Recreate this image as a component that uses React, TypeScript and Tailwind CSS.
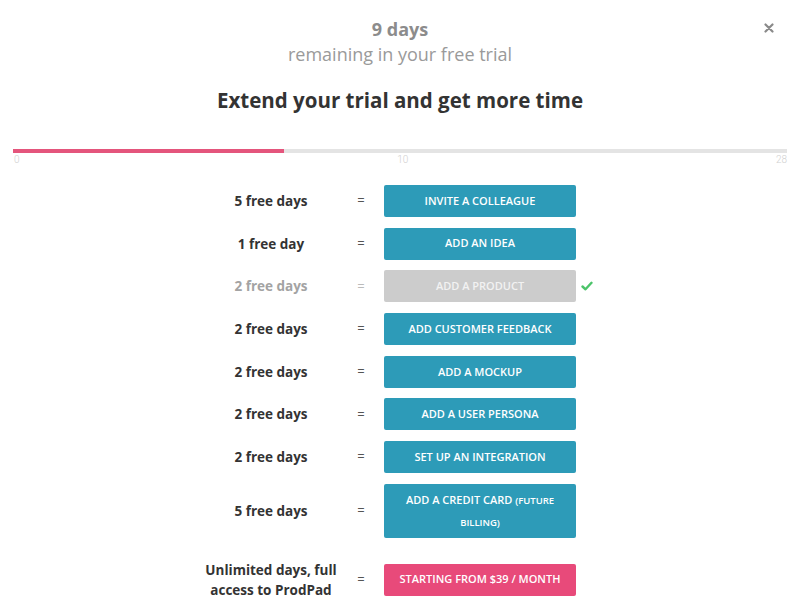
import React from 'react';

type Row = {
  days: React.ReactNode;
  action: React.ReactNode;
  done?: boolean;
  tall?: boolean;
  pink?: boolean;
};

const rows: Row[] = [
  { days: '5 free days', action: 'Invite a colleague' },
  { days: '1 free day', action: 'Add an idea' },
  { days: '2 free days', action: 'Add a product', done: true },
  { days: '2 free days', action: 'Add customer feedback' },
  { days: '2 free days', action: 'Add a mockup' },
  { days: '2 free days', action: 'Add a user persona' },
  { days: '2 free days', action: 'Set up an integration' },
  {
    days: '5 free days',
    action: (
      <>
        Add a credit card <span className="text-[9.5px]">(future billing)</span>
      </>
    ),
    tall: true,
  },
  {
    days: (
      <>
        Unlimited days, full
        <br />
        access to ProdPad
      </>
    ),
    action: 'Starting from $39 / month',
    pink: true,
  },
];

const App: React.FC = () => {
  return (
    <div
      className="relative w-[800px] h-[612px] bg-white overflow-hidden"
      style={{ fontFamily: '"Open Sans", "Noto Sans", sans-serif' }}
    >
      <button className="absolute top-[23px] right-[26px] text-[#8a8a8a]">
        <svg width="10" height="10" viewBox="0 0 10 10">
          <path d="M1.5 1.5 L8.5 8.5 M8.5 1.5 L1.5 8.5" stroke="currentColor" strokeWidth="2.2" strokeLinecap="round" />
        </svg>
      </button>

      <div className="pt-[17px] text-center">
        <div className="text-[18px] font-bold text-[#8c8c8c] leading-[25px]">9 days</div>
        <div className="text-[18px] text-[#9a9a9a] leading-[25px]">remaining in your free trial</div>
        <h1 className="mt-[19px] text-[20.5px] font-bold text-[#333] leading-[28px]">
          Extend your trial and get more time
        </h1>
      </div>

      <div className="mt-[35px] px-[13px]">
        <div className="h-[4px] bg-[#e4e4e4] flex">
          <div className="w-[271px] h-full bg-[#e4557c]" />
        </div>
        <div
          className="flex justify-between text-[10px] text-[#d0d0d0] leading-[12px] mt-[1px]"
          style={{ fontFamily: '"Roboto", sans-serif', fontWeight: 300 }}
        >
          <span className="pl-[1px]">0</span>
          <span className="pl-[10px]">10</span>
          <span>28</span>
        </div>
      </div>

      <div className="mt-[19px] flex flex-col gap-[10.7px] pl-[196px]">
        {rows.map((r, i) => (
          <div key={i} className={`flex items-center ${r.pink ? 'mt-[11px]' : ''}`}>
            <div
              className={`w-[150px] text-center text-[13.5px] font-bold leading-[20px] ${
                r.done ? 'text-[#a3a3a3]' : 'text-[#333]'
              }`}
            >
              {r.days}
            </div>
            <div className={`w-[30px] text-center text-[13px] ${r.done ? 'text-[#bbb]' : 'text-[#555]'}`}>=</div>
            <div
              className={`ml-[8px] w-[192px] rounded-[2px] flex items-center justify-center text-center uppercase font-semibold text-[11px] ${
                r.tall ? 'h-[54px] px-[16px] leading-[21px]' : 'h-[32px]'
              } ${r.done ? 'bg-[#cccccc] text-[#f2f2f2]' : r.pink ? 'bg-[#e84a7a] text-white' : 'bg-[#2d9bb8] text-white'}`}
            >
              <span>{r.action}</span>
            </div>
            {r.done && (
              <svg className="ml-[5px]" width="12" height="10" viewBox="0 0 12 10">
                <path d="M1.5 5.5 L4.5 8.3 L10.5 1.8" fill="none" stroke="#4cc46a" strokeWidth="2.4" strokeLinecap="round" strokeLinejoin="round" />
              </svg>
            )}
          </div>
        ))}
      </div>
    </div>
  );
};

export default App;
